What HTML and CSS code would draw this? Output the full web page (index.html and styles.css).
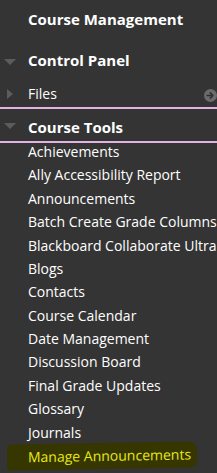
FILE: index.html
```html
<!DOCTYPE html>
<html>
<head>
<meta charset="utf-8">
<link rel="stylesheet" href="styles.css">
</head>
<body>
<nav class="menu">
  <h2 class="title">Course Management</h2>
  <div class="section-head first">
    <span class="tri-down"></span>
    <span class="head-label">Control Panel</span>
  </div>
  <div class="files-row">
    <span class="tri-right"></span>
    <span class="files-label">Files</span>
    <span class="go-icon">
      <svg width="13" height="13" viewBox="0 0 13 13"><circle cx="6.5" cy="6.5" r="6.5" fill="#6b6b6b"/><path d="M3.2 6.5h5.6M6.3 3.9l2.6 2.6-2.6 2.6" stroke="#2e2e2e" stroke-width="1.6" fill="none" stroke-linecap="round" stroke-linejoin="round"/></svg>
    </span>
  </div>
  <div class="section-head tools">
    <span class="tri-down"></span>
    <span class="head-label">Course Tools</span>
  </div>
  <ul class="tools-list">
    <li class="item">Achievements</li>
    <li class="item">Ally Accessibility Report</li>
    <li class="item">Announcements</li>
    <li class="item">Batch Create Grade Columns</li>
    <li class="item">Blackboard Collaborate Ultra</li>
    <li class="item">Blogs</li>
    <li class="item">Contacts</li>
    <li class="item">Course Calendar</li>
    <li class="item">Date Management</li>
    <li class="item">Discussion Board</li>
    <li class="item">Final Grade Updates</li>
    <li class="item">Glossary</li>
    <li class="item">Journals</li>
    <li class="item highlighted"><span class="marker">Manage Announcements</span></li>
  </ul>
</nav>
</body>
</html>
```

FILE: styles.css
```css
html, body {
  margin: 0;
  padding: 0;
  background: #343434;
}
body {
  width: 217px;
  height: 473px;
  overflow: hidden;
  font-family: "Open Sans", "Liberation Sans", sans-serif;
  color: #ffffff;
}
.menu {
  display: flex;
  flex-direction: column;
}
.title {
  margin: 0;
  padding: 9px 0 0 28px;
  font-size: 15px;
  font-weight: 700;
  line-height: 20px;
  height: 20px;
  white-space: nowrap;
}
.section-head {
  display: flex;
  align-items: flex-start;
  height: 20px;
  position: relative;
}
.section-head.first {
  margin-top: 21px;
}
.head-label {
  position: absolute;
  left: 28px;
  top: 0;
  font-size: 15px;
  font-weight: 700;
  line-height: 20px;
  white-space: nowrap;
}
.tri-down {
  margin-left: 4px;
  margin-top: 9px;
  width: 0;
  height: 0;
  border-left: 6px solid transparent;
  border-right: 6px solid transparent;
  border-top: 6px solid #5c5c5c;
}
.files-row {
  display: flex;
  align-items: center;
  height: 20px;
  margin-top: 14px;
  padding-bottom: 3px;
  border-bottom: 2px solid #e2b4e2;
  position: relative;
}
.tri-right {
  margin-left: 7px;
  width: 0;
  height: 0;
  border-top: 5px solid transparent;
  border-bottom: 5px solid transparent;
  border-left: 6px solid #5c5c5c;
}
.files-label {
  margin-left: 15px;
  font-size: 14px;
  line-height: 20px;
}
.go-icon {
  margin-left: auto;
  display: flex;
  margin-top: 3px;
}
.section-head.tools {
  margin-top: 8px;
  height: 24px;
  border-bottom: 2px solid #e2b4e2;
}
.section-head.tools .tri-down {
  margin-top: 6px;
}
.tools-list {
  list-style: none;
  margin: 0;
  padding: 0;
}
.item {
  box-sizing: border-box;
  height: 23.38px;
  padding: 1px 0 0 28px;
  font-size: 14px;
  line-height: 16px;
  white-space: nowrap;
}
.highlighted {
  color: #e8e81a;
}
.marker {
  display: inline-block;
  margin: -5px 0 -5px -21px;
  padding: 5px 6px 5px 21px;
  background: #363600;
  border-radius: 5px 8px 6px 4px;
  transform: skewY(-1deg);
}
```
